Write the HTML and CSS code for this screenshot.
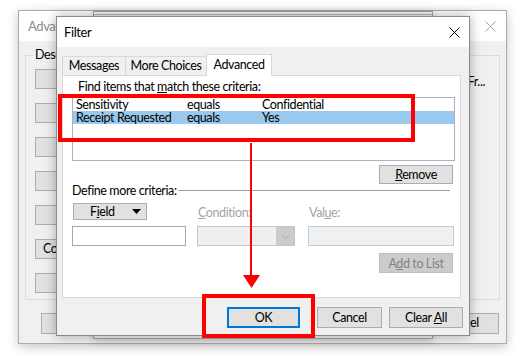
FILE: index.html
```html
<!DOCTYPE html>
<html>
<head>
<meta charset="utf-8">
<link rel="stylesheet" href="styles.css">
</head>
<body>
<div class="desk">

  <div class="win back">
    <div class="titlebar">
      <span class="title inactive">Advanced Find</span>
      <svg class="close" width="11" height="11" viewBox="0 0 11 11"><path d="M0.5 0.5L10.5 10.5M10.5 0.5L0.5 10.5" stroke="#a0a0a0" stroke-width="1" fill="none"/></svg>
    </div>
    <div class="back-body">
      <div class="group">
        <span class="legend">Description</span>
        <div class="group-inner">
          <div class="btncol">
            <div class="bbtn"></div>
            <div class="bbtn"></div>
            <div class="bbtn"></div>
            <div class="bbtn"></div>
            <div class="bbtn"></div>
            <div class="bbtn">Conditions...</div>
            <div class="bbtn"></div>
          </div>
          <div class="rightcol"><span class="fr">Fr...</span></div>
        </div>
      </div>
      <div class="back-foot">
        <div class="bbtn wide"></div>
        <div class="bbtn cancel">Cancel</div>
      </div>
    </div>
  </div>

  <div class="win middle">
    <div class="titlebar"></div>
  </div>

  <div class="win filter">
    <div class="titlebar">
      <span class="title">Filter</span>
      <svg class="close" width="11" height="11" viewBox="0 0 11 11"><path d="M0.5 0.5L10.5 10.5M10.5 0.5L0.5 10.5" stroke="#000" stroke-width="1" fill="none"/></svg>
    </div>
    <div class="fbody">
      <div class="tabs">
        <div class="tab t1">Messages</div>
        <div class="tab t2">More Choices</div>
        <div class="tab t3 sel">Advanced</div>
      </div>
      <div class="panel">
        <div class="hdr">Find items that <u>m</u>atch these criteria:</div>
        <div class="listbox">
          <div class="row"><span class="c1">Sensitivity</span><span class="c2">equals</span><span class="c3">Confidential</span></div>
          <div class="row hl"><span class="c1">Receipt Requested</span><span class="c2">equals</span><span class="c3">Yes</span></div>
        </div>
        <div class="rm-row"><div class="btn rm"><span><u>R</u>emove</span></div></div>
        <div class="define"><span>Define more criteria:</span><span class="line"></span></div>
        <div class="crit">
          <div class="btn field"><span>F<u>i</u>eld</span><svg class="caret" width="9" height="5" viewBox="0 0 9 5"><path d="M0 0H9L4.5 5Z" fill="#000"/></svg></div>
          <div class="lbl dis"><u>C</u>ondition:</div>
          <div class="lbl dis val-l">Val<u>u</u>e:</div>
          <div class="inp"></div>
          <div class="combo"><span class="arr"><svg width="9" height="5" viewBox="0 0 9 5"><path d="M0.5 0.5L4.5 4.5L8.5 0.5" stroke="#a8a8a8" fill="none"/></svg></span></div>
          <div class="inp val"></div>
        </div>
        <div class="add-row"><div class="btn add"><span>A<u>d</u>d to List</span></div></div>
      </div>
      <div class="foot">
        <div class="btn ok"><span>OK</span></div>
        <div class="btn cancel2"><span>Cancel</span></div>
        <div class="btn clear"><span>Clear <u>A</u>ll</span></div>
      </div>
    </div>
  </div>

  <div class="mark mark1"></div>
  <svg class="arrow" width="20" height="146" viewBox="0 0 20 146"><path d="M8 0V134" stroke="#ff0000" stroke-width="2"/><path d="M0 132H17L8.5 145Z" fill="#ff0000"/></svg>
  <div class="mark mark2"></div>
</div>
</body>
</html>
```

FILE: styles.css
```css
* { box-sizing: border-box; }
html, body { margin: 0; padding: 0; background: #fff; }
body {
  font-family: Lato, "Noto Sans", sans-serif;
  font-size: 12.5px;
  letter-spacing: -0.4px;
  color: #000;
  width: 523px;
  height: 356px;
  overflow: hidden;
}
u { text-decoration: underline; text-underline-offset: 1px; }
.desk { position: relative; width: 523px; height: 356px; }

.win {
  position: absolute;
  background: #f0f0f0;
  border: 1px solid #9b9b9b;
  display: flex;
  flex-direction: column;
}
.titlebar {
  background: #fff;
  display: flex;
  align-items: center;
  justify-content: space-between;
  flex: none;
}
.close { flex: none; }

/* back window */
.back {
  left: 18px; top: 10px; width: 489px; height: 334px;
  border-color: #aaaaaa;
  box-shadow: 0 3px 10px rgba(0,0,0,0.22);
}
.back .titlebar { height: 30px; padding: 0 10px 0 9px; }
.back .title { color: #8c8c8c; font-size: 13px; }
.back-body { padding: 14px 6px 0 6px; flex: 1; display: flex; flex-direction: column; }
.group {
  position: relative;
  border: 1px solid #dcdcdc;
  width: 475px;
  padding: 13px 14px 6px 9px;
}
.legend {
  position: absolute;
  left: 7px; top: -8px;
  background: #f0f0f0;
  padding: 0 2px;
  line-height: 14px;
}
.group-inner { display: flex; justify-content: space-between; }
.btncol { display: flex; flex-direction: column; gap: 14px; }
.bbtn {
  width: 90px; height: 20px;
  background: #e1e1e1;
  border: 1px solid #adadad;
  padding: 0 7px;
  line-height: 18px;
  white-space: nowrap;
  overflow: hidden;
}
.rightcol { padding-top: 5px; }
.fr { line-height: 14px; }
.back-foot { display: flex; justify-content: space-between; margin-top: 13px; padding: 0 1px 0 16px; }
.bbtn.cancel { width: 75px; text-align: center; padding: 0; height: 21px; }
.bbtn.wide { height: 21px; }

/* middle window */
.middle {
  left: 93px; top: 11px; width: 340px; height: 328px;
  border-color: #a3a3a3;
  box-shadow: 0 2px 8px rgba(0,0,0,0.2);
}
.middle .titlebar { height: 3px; background: #f4f4f4; border-bottom: 1px solid #b5b5b5; }

/* filter dialog */
.filter {
  left: 56px; top: 16px; width: 414px; height: 320px;
  border-color: #8a8a8a;
  box-shadow: 0 0 11px rgba(0,0,0,0.32);
}
.filter .titlebar { height: 30px; padding: 0 9px 0 7px; }
.filter .title { font-size: 13px; }
.fbody { padding: 7px 6px 0 5px; flex: 1; display: flex; flex-direction: column; }

.tabs { display: flex; align-items: flex-end; height: 21px; position: relative; z-index: 1; }
.tab {
  height: 19px;
  border: 1px solid #d9d9d9;
  border-bottom: none;
  background: #f0f0f0;
  text-align: center;
  line-height: 18px;
}
.t1 { width: 64px; }
.t2 { width: 82px; margin-left: -1px; }
.t3 { width: 66px; margin-left: -1px; }
.tab.sel { height: 22px; margin-bottom: -1px; background: #fff; line-height: 20px; }

.panel {
  width: 399px;
  height: 223px;
  background: #fff;
  border: 1px solid #d9d9d9;
  padding: 0 5px 0 9px;
  display: flex;
  flex-direction: column;
}
.hdr { padding: 3px 0 0 6px; line-height: 16px; height: 21px; }
.listbox {
  height: 64px;
  border: 1px solid #abb3c2;
}
.row { height: 13px; line-height: 13px; display: flex; padding-left: 3px; white-space: nowrap; }
.row.hl { background: #99c9ec; }
.c1 { width: 111px; }
.c2 { width: 75px; }

.btn {
  background: #e1e1e1;
  border: 1px solid #adadad;
  display: flex;
  align-items: center;
  justify-content: center;
  white-space: nowrap;
}
.rm-row, .add-row { display: flex; justify-content: flex-end; padding-right: 2px; }
.rm-row { margin-top: 4px; }
.rm { width: 74px; height: 19px; }

.define { display: flex; align-items: center; height: 13px; line-height: 13px; white-space: nowrap; padding-right: 5px; }
.define .line { flex: 1; height: 1px; background: #a0a0a0; margin-left: 1px; }

.crit {
  display: grid;
  grid-template-columns: 114px 98px 144px;
  column-gap: 11px;
  row-gap: 6px;
  margin-top: 6px;
  align-items: end;
}
.crit > .val-l, .crit > .val { margin-left: 2px; }
.crit > .val { width: 146px; }
.field {
  width: 74px; height: 17px; margin-left: 1px;
  justify-content: space-between;
  padding: 0 5px 0 16px;
}
.caret { flex: none; }
.lbl { line-height: 14px; padding-left: 1px; }
.dis { color: #a3a3a3; }
.inp { height: 20px; border: 1px solid #a6a6a6; background: #fff; }
.inp.val { background: #f0f0f0; border-color: #b7cde4; }
.combo {
  height: 20px;
  border: 1px solid #b9c9da;
  background: #efefef;
  display: flex;
  justify-content: flex-end;
}
.arr { width: 18px; background: #cccccc; display: flex; align-items: center; justify-content: center; }

.add-row { margin-top: 7px; }
.add { width: 74px; height: 20px; background: #cccccc; border-color: #bfbfbf; color: #838383; }

.foot { display: flex; justify-content: flex-end; margin-top: 9px; }
.foot .btn { height: 21px; }
.ok { width: 73px; border: 2px solid #0078d7; }
.cancel2 { width: 65px; margin-left: 17px; }
.clear { width: 74px; margin-left: 7px; }

/* annotations */
.mark { position: absolute; border: 4px solid #ff0000; }
.mark1 { left: 58px; top: 94px; width: 357px; height: 48px; }
.mark2 { left: 202px; top: 294px; width: 113px; height: 44px; }
.arrow { position: absolute; left: 243px; top: 143px; }
```
